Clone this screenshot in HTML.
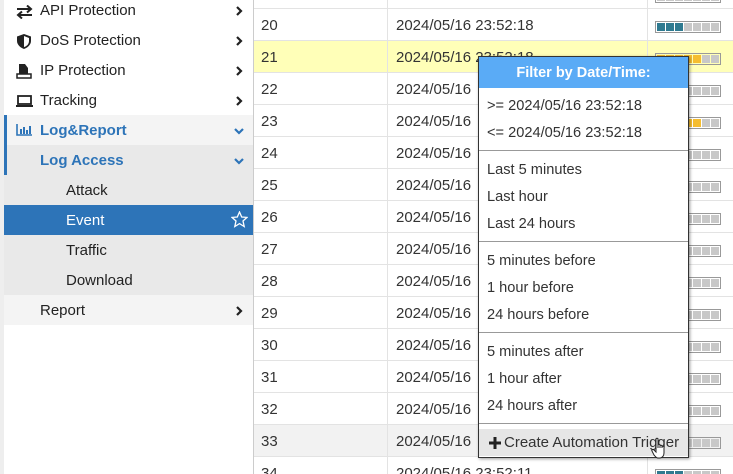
<!DOCTYPE html>
<html><head><meta charset="utf-8"><style>
*{margin:0;padding:0;box-sizing:border-box}
html,body{width:733px;height:474px;overflow:hidden}
body{position:relative;background:#fff;font-family:"Liberation Sans",sans-serif;font-size:14px;color:#333}
.abs{position:absolute}
.side{left:0;top:0;width:254px;height:474px;background:#fff;border-left:4px solid #eee;border-right:1px solid #ccc}
.si{position:absolute;left:0;width:249px;height:30px;line-height:32px;font-size:15px;color:#222}
.si .t{position:absolute}
.chev{position:absolute;right:10px;top:10px}
.row{position:absolute;left:254px;width:479px;height:32px;border-bottom:1px solid #e3e3e3;line-height:33px;font-size:15px;color:#333}
.row .n{position:absolute;left:7px}
.row .d{position:absolute;left:142px}
.row .c1{position:absolute;left:133px;top:0;width:1px;height:32px;background:#e3e3e3}
.row .c2{position:absolute;left:393px;top:0;width:1px;height:32px;background:#e3e3e3}
.bar{position:absolute;left:401px;top:12px;width:66px;height:12px;border:1px solid #999;display:flex;gap:1px;padding:1px}
.bar i{display:block;width:8px;height:8px;background:#c8c8c8}
.pop{left:478px;top:56px;width:211px;height:402px;background:#fff;border:1px solid #333;box-shadow:1px 1px 3px rgba(0,0,0,.4)}
.ph{height:31px;background:#5aabf6;color:#fff;text-align:center;line-height:32px;font-size:14.5px;font-weight:bold}
.pi{position:absolute;left:8px;font-size:14.6px;color:#333}
.sep{position:absolute;left:0;width:209px;height:1px;background:#999}
</style></head><body>
<div class="abs side"></div>
<div class="si" style="left:4px;top:-5px"><svg class="t" style="left:12px;top:10px" width="17" height="14" viewBox="0 0 17 14"><path d="M1 4H15M11 0.5L15 4L11 7.5M16 10H2M6 6.5L2 10L6 13.5" fill="none" stroke="#222" stroke-width="2"/></svg><span class="t" style="left:36px">API Protection</span><svg class="chev" width="8" height="12" viewBox="0 0 8 12"><path d="M2 2L6 6L2 10" fill="none" stroke="#222" stroke-width="2.2"/></svg></div>
<div class="si" style="left:4px;top:25px"><svg class="t" style="left:13px;top:9px" width="14" height="15" viewBox="0 0 14 15"><path d="M7 0L14 2.5V7C14 11 10 14 7 15C4 14 0 11 0 7V2.5Z" fill="#222"/><path d="M7 2L12 4V7C12 10 9.5 12.5 7 13Z" fill="#fff"/></svg><span class="t" style="left:36px">DoS Protection</span><svg class="chev" width="8" height="12" viewBox="0 0 8 12"><path d="M2 2L6 6L2 10" fill="none" stroke="#222" stroke-width="2.2"/></svg></div>
<div class="si" style="left:4px;top:55px"><svg class="t" style="left:12px;top:8px" width="16" height="16" viewBox="0 0 16 16"><path d="M3 1H9L12 5V11H3Z" fill="#222"/><rect x="1" y="11" width="14" height="4" fill="none" stroke="#222" stroke-width="1.5"/></svg><span class="t" style="left:36px">IP Protection</span><svg class="chev" width="8" height="12" viewBox="0 0 8 12"><path d="M2 2L6 6L2 10" fill="none" stroke="#222" stroke-width="2.2"/></svg></div>
<div class="si" style="left:4px;top:85px"><svg class="t" style="left:12px;top:10px" width="17" height="13" viewBox="0 0 17 13"><rect x="2" y="1" width="13" height="8" fill="none" stroke="#222" stroke-width="1.8"/><rect x="0" y="10" width="17" height="2" fill="#222"/></svg><span class="t" style="left:36px">Tracking</span><svg class="chev" width="8" height="12" viewBox="0 0 8 12"><path d="M2 2L6 6L2 10" fill="none" stroke="#222" stroke-width="2.2"/></svg></div>
<div class="si" style="left:4px;top:115px;background:#f4f4f4;color:#2d74b8;font-weight:bold;border-left:3px solid #2d74b8"><svg class="t" style="left:9px;top:9px" width="16" height="12" viewBox="0 0 16 12"><path d="M1 0V11H16" fill="none" stroke="#2d74b8" stroke-width="1.6"/><rect x="4" y="5" width="2" height="5" fill="#2d74b8"/><rect x="7" y="3" width="2" height="7" fill="#2d74b8"/><rect x="10" y="6" width="2" height="4" fill="#2d74b8"/><rect x="13" y="2" width="2" height="8" fill="#2d74b8"/></svg><span class="t" style="left:33px">Log&amp;Report</span><svg class="chev" style="top:12px;right:8px" width="12" height="8" viewBox="0 0 12 8"><path d="M2 2L6 6L10 2" fill="none" stroke="#2d74b8" stroke-width="2.2"/></svg></div>
<div class="si" style="left:4px;top:145px;background:#e9e9e9;color:#2d74b8;font-weight:bold;border-left:3px solid #2d74b8"><span class="t" style="left:33px">Log Access</span><svg class="chev" style="top:12px;right:8px" width="12" height="8" viewBox="0 0 12 8"><path d="M2 2L6 6L10 2" fill="none" stroke="#2d74b8" stroke-width="2.2"/></svg></div>
<div class="si" style="left:4px;top:175px;background:#e9e9e9"><span class="t" style="left:62px">Attack</span></div>
<div class="si" style="left:4px;top:205px;background:#2d74b8;color:#fff"><span class="t" style="left:62px">Event</span><svg class="chev" style="top:6px;right:5px" width="17" height="17" viewBox="0 0 17 17"><path d="M8.5 1L10.7 6L16 6.4L12 10L13.2 15.5L8.5 12.6L3.8 15.5L5 10L1 6.4L6.3 6Z" fill="none" stroke="#fff" stroke-width="1.3"/></svg></div>
<div class="si" style="left:4px;top:235px;background:#e9e9e9"><span class="t" style="left:62px">Traffic</span></div>
<div class="si" style="left:4px;top:265px;background:#e9e9e9"><span class="t" style="left:62px">Download</span></div>
<div class="si" style="left:4px;top:295px;background:#f4f4f4"><span class="t" style="left:36px">Report</span><svg class="chev" width="8" height="12" viewBox="0 0 8 12"><path d="M2 2L6 6L2 10" fill="none" stroke="#222" stroke-width="2.2"/></svg></div>

<div class="row" style="top:-23px"><div class="c1"></div><div class="c2"></div><div class="bar" style="top:14px"><i></i><i></i><i></i><i></i><i></i><i></i><i></i></div></div>
<div class="row" style="top:9px"><span class="n">20</span><span class="d">2024/05/16 23:52:18</span><div class="c1"></div><div class="c2"></div><div class="bar"><i style="background:#2f7a90"></i><i style="background:#2f7a90"></i><i style="background:#2f7a90"></i><i></i><i></i><i></i><i></i></div></div>
<div class="row" style="top:41px;background:#ffffb8"><span class="n">21</span><span class="d">2024/05/16 23:52:18</span><div class="c1"></div><div class="c2"></div><div class="bar"><i style="background:#f5bd30"></i><i style="background:#f5bd30"></i><i style="background:#f5bd30"></i><i style="background:#f5bd30"></i><i style="background:#f5bd30"></i><i></i><i></i></div></div>
<div class="row" style="top:73px"><span class="n">22</span><span class="d">2024/05/16</span><div class="c1"></div><div class="c2"></div><div class="bar"><i></i><i></i><i></i><i></i><i></i><i></i><i></i></div></div>
<div class="row" style="top:105px"><span class="n">23</span><span class="d">2024/05/16</span><div class="c1"></div><div class="c2"></div><div class="bar"><i style="background:#f5bd30"></i><i style="background:#f5bd30"></i><i style="background:#f5bd30"></i><i style="background:#f5bd30"></i><i style="background:#f5bd30"></i><i></i><i></i></div></div>
<div class="row" style="top:137px"><span class="n">24</span><span class="d">2024/05/16</span><div class="c1"></div><div class="c2"></div><div class="bar"><i></i><i></i><i></i><i></i><i></i><i></i><i></i></div></div>
<div class="row" style="top:169px"><span class="n">25</span><span class="d">2024/05/16</span><div class="c1"></div><div class="c2"></div><div class="bar"><i></i><i></i><i></i><i></i><i></i><i></i><i></i></div></div>
<div class="row" style="top:201px"><span class="n">26</span><span class="d">2024/05/16</span><div class="c1"></div><div class="c2"></div><div class="bar"><i></i><i></i><i></i><i></i><i></i><i></i><i></i></div></div>
<div class="row" style="top:233px"><span class="n">27</span><span class="d">2024/05/16</span><div class="c1"></div><div class="c2"></div><div class="bar"><i></i><i></i><i></i><i></i><i></i><i></i><i></i></div></div>
<div class="row" style="top:265px"><span class="n">28</span><span class="d">2024/05/16</span><div class="c1"></div><div class="c2"></div><div class="bar"><i></i><i></i><i></i><i></i><i></i><i></i><i></i></div></div>
<div class="row" style="top:297px"><span class="n">29</span><span class="d">2024/05/16</span><div class="c1"></div><div class="c2"></div><div class="bar"><i></i><i></i><i></i><i></i><i></i><i></i><i></i></div></div>
<div class="row" style="top:329px"><span class="n">30</span><span class="d">2024/05/16</span><div class="c1"></div><div class="c2"></div><div class="bar"><i></i><i></i><i></i><i></i><i></i><i></i><i></i></div></div>
<div class="row" style="top:361px"><span class="n">31</span><span class="d">2024/05/16</span><div class="c1"></div><div class="c2"></div><div class="bar"><i></i><i></i><i></i><i></i><i></i><i></i><i></i></div></div>
<div class="row" style="top:393px"><span class="n">32</span><span class="d">2024/05/16</span><div class="c1"></div><div class="c2"></div><div class="bar"><i></i><i></i><i></i><i></i><i></i><i></i><i></i></div></div>
<div class="row" style="top:425px;background:#f2f2f2"><span class="n">33</span><span class="d">2024/05/16</span><div class="c1"></div><div class="c2"></div><div class="bar"><i></i><i></i><i></i><i></i><i></i><i></i><i></i></div></div>
<div class="row" style="top:457px"><span class="n">34</span><span class="d">2024/05/16 23:52:11</span><div class="c1"></div><div class="c2"></div><div class="bar"><i style="background:#2f7a90"></i><i style="background:#2f7a90"></i><i style="background:#2f7a90"></i><i></i><i></i><i></i><i></i></div></div>

<div class="abs pop">
<div class="ph">Filter by Date/Time:</div>
<div class="pi" style="top:41px">&gt;= 2024/05/16 23:52:18</div>
<div class="pi" style="top:68px">&lt;= 2024/05/16 23:52:18</div>
<div class="sep" style="top:93px"></div>
<div class="pi" style="top:105px">Last 5 minutes</div>
<div class="pi" style="top:132px">Last hour</div>
<div class="pi" style="top:159px">Last 24 hours</div>
<div class="sep" style="top:184px"></div>
<div class="pi" style="top:196px">5 minutes before</div>
<div class="pi" style="top:223px">1 hour before</div>
<div class="pi" style="top:250px">24 hours before</div>
<div class="sep" style="top:275px"></div>
<div class="pi" style="top:287px">5 minutes after</div>
<div class="pi" style="top:314px">1 hour after</div>
<div class="pi" style="top:341px">24 hours after</div>
<div class="sep" style="top:366px"></div>
<div class="abs" style="left:0;top:372px;width:209px;height:27px;background:#e6e6e6"></div>
<svg class="abs" style="left:10px;top:380px" width="12" height="12" viewBox="0 0 12 12"><path d="M6 0V12M0 6H12" stroke="#222" stroke-width="3"/></svg>
<div class="pi" style="top:377px;left:25px;font-size:15px">Create Automation Trigger</div>
<svg class="abs" style="left:172px;top:380px" width="20" height="24" viewBox="0 0 20 24"><path d="M5 2C5 1 7 1 7 2V11L7 8C7 7 9 7 9 8V11V9C9 8 11 8 11 9V11V10C11 9 13 9 13 10V16C13 19 11 21 9 21H7C5 21 4 19 3 18L1 14C0 13 2 12 3 13L5 15Z" fill="#fff" stroke="#222" stroke-width="1"/></svg>
</div>
</body></html>
